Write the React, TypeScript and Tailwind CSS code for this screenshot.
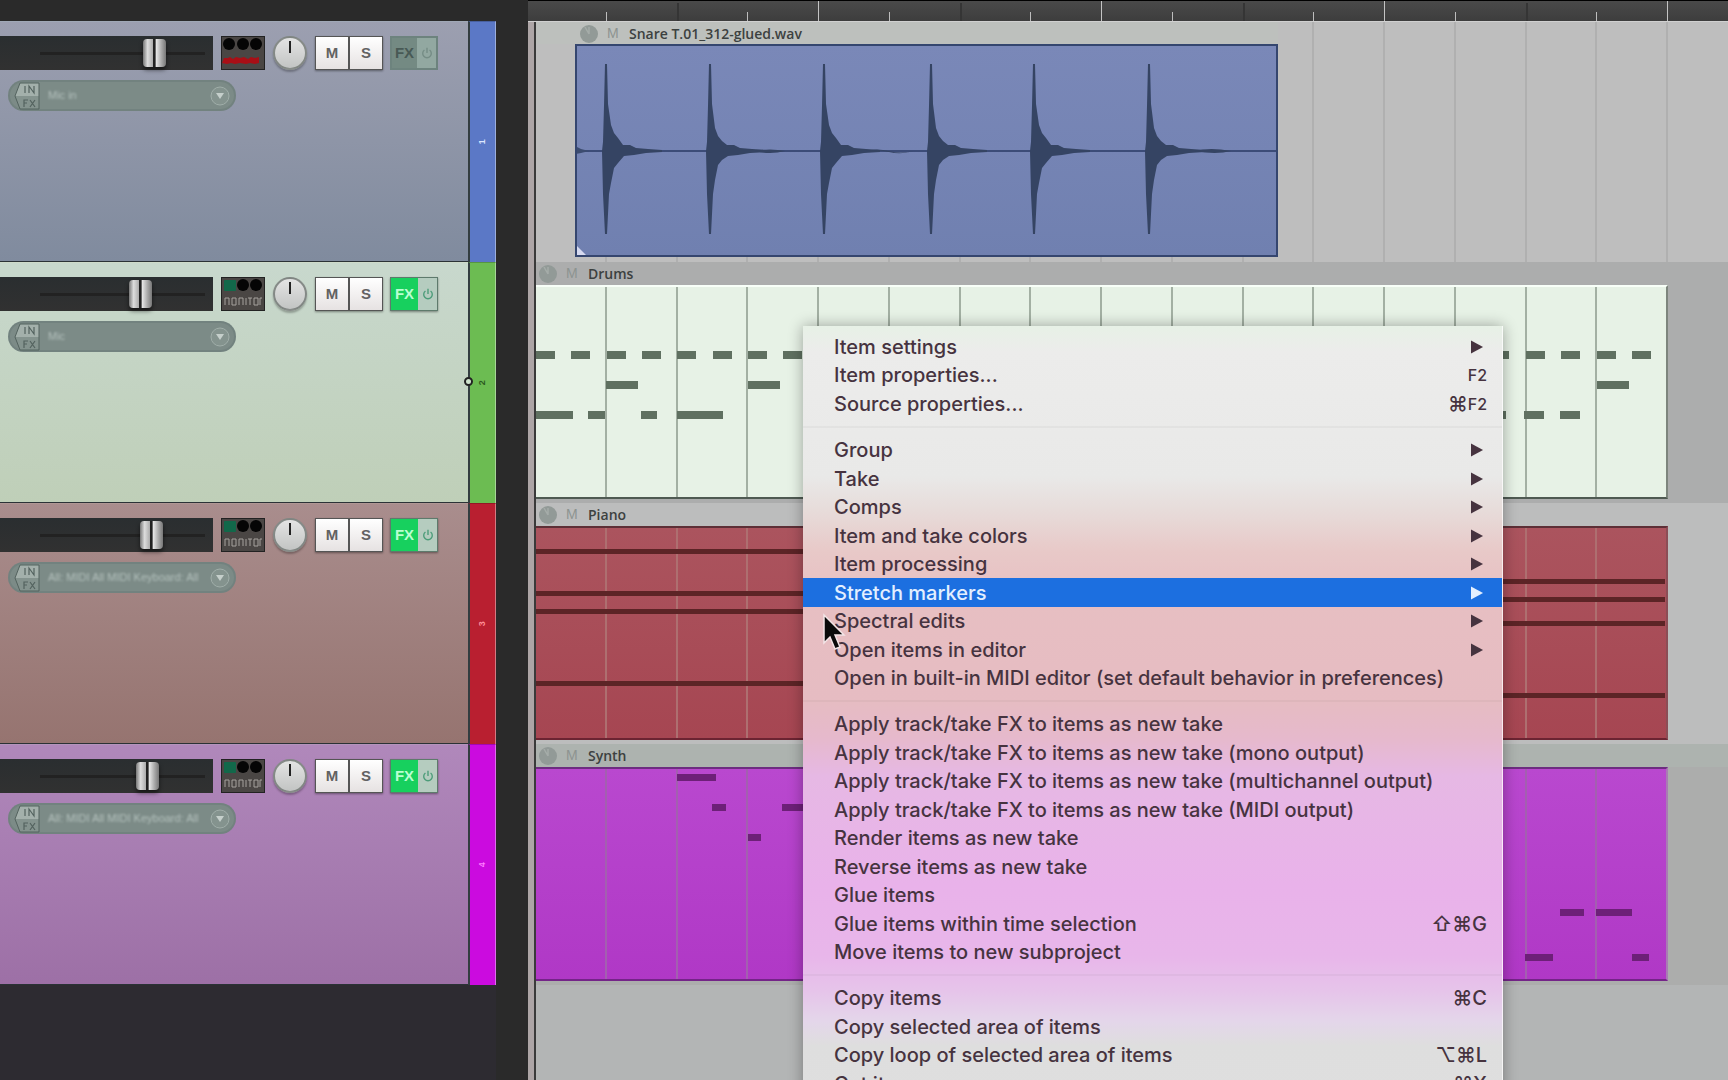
import React from "react";

type Note = { x: number; y: number; w: number };

type Track = {
  id: number;
  name: string;
  volume: number;
  input: string;
  armed: string;
  fxOn: boolean;
  panel: string;
  strip: string;
  number: string;
};

type MenuEntry = { label: string; keys?: string; sub?: boolean; active?: boolean; small?: string };

const tracks: Track[] = [
  { id: 1, name: "Snare", volume: 143, input: "Mic in", armed: "input", fxOn: false, panel: "from-[#9c9fb0] to-[#808b9e]", strip: "bg-[#5b78c6]", number: "text-[#dce6ff]" },
  { id: 2, name: "Drums", volume: 129, input: "Mic", armed: "monitor", fxOn: true, panel: "from-[#c8d8cd] to-[#bfcfb8]", strip: "bg-[#6cbc52]", number: "text-[#2c5a20]" },
  { id: 3, name: "Piano", volume: 140, input: "All: MIDI All MIDI Keyboard: All", armed: "monitor", fxOn: true, panel: "from-[#a98d8d] to-[#967470]", strip: "bg-[#b91f30]", number: "text-[#ff8f97]" },
  { id: 4, name: "Synth", volume: 136, input: "All: MIDI All MIDI Keyboard: All", armed: "monitor", fxOn: true, panel: "from-[#b088bb] to-[#9d70a6]", strip: "bg-[#cb0bdf]", number: "text-[#ff7dff]" },
];

const hats: Note[] = Array.from({ length: 32 }, (_, i) => ({ x: Math.round(i * 35.35), y: 66, w: 19 }));

const drumNotes: Note[] = [
  ...hats,
  ...Array.from({ length: 8 }, (_, i) => ({ x: 70 + Math.round(i * 141.5), y: 96, w: 32 })),
  { x: 0, y: 126, w: 37 },
  { x: 52, y: 126, w: 17 },
  { x: 105, y: 126, w: 16 },
  { x: 141, y: 126, w: 46 },
  { x: 952, y: 126, w: 18 },
  { x: 988, y: 126, w: 20 },
  { x: 1024, y: 126, w: 20 },
];

const pianoNotes: Note[] = [
  { x: 0, y: 23, w: 560 },
  { x: 0, y: 65, w: 560 },
  { x: 0, y: 83, w: 560 },
  { x: 0, y: 155, w: 560 },
  { x: 560, y: 53, w: 569 },
  { x: 560, y: 71, w: 569 },
  { x: 560, y: 95, w: 569 },
  { x: 560, y: 167, w: 569 },
];

const synthNotes: Note[] = [
  { x: 141, y: 7, w: 39 },
  { x: 176, y: 37, w: 14 },
  { x: 212, y: 67, w: 13 },
  { x: 246, y: 37, w: 26 },
  { x: 989, y: 187, w: 28 },
  { x: 1024, y: 142, w: 24 },
  { x: 1060, y: 142, w: 36 },
  { x: 1096, y: 187, w: 17 },
];

const menu: MenuEntry[][] = [
  [
    { label: "Item settings", sub: true },
    { label: "Item properties...", small: "F2" },
    { label: "Source properties...", keys: "⌘", small: "F2" },
  ],
  [
    { label: "Group", sub: true },
    { label: "Take", sub: true },
    { label: "Comps", sub: true },
    { label: "Item and take colors", sub: true },
    { label: "Item processing", sub: true },
    { label: "Stretch markers", sub: true, active: true },
    { label: "Spectral edits", sub: true },
    { label: "Open items in editor", sub: true },
    { label: "Open in built-in MIDI editor (set default behavior in preferences)" },
  ],
  [
    { label: "Apply track/take FX to items as new take" },
    { label: "Apply track/take FX to items as new take (mono output)" },
    { label: "Apply track/take FX to items as new take (multichannel output)" },
    { label: "Apply track/take FX to items as new take (MIDI output)" },
    { label: "Render items as new take" },
    { label: "Reverse items as new take" },
    { label: "Glue items" },
    { label: "Glue items within time selection", keys: "⇧⌘G" },
    { label: "Move items to new subproject" },
  ],
  [
    { label: "Copy items", keys: "⌘C" },
    { label: "Copy selected area of items" },
    { label: "Copy loop of selected area of items", keys: "⌥⌘L" },
    { label: "Cut items", keys: "⌘X" },
  ],
];

const GRID = 70.75;

const ArmButton = ({ label }: { label: string }) => {
  const red = label === "input";
  return (
    <button aria-label={label} className="ml-2 h-[34px] w-[44px] border border-[#222] bg-[#4a4644]">
      <svg viewBox="0 0 42 32" className="block h-full w-full">
        {red ? <circle cx="7" cy="7" r="6" fill="#050505" /> : <rect x="2" y="2" width="12" height="11" rx="1" fill="#12684a" />}
        <circle cx="21" cy="7" r="6" fill="#050505" />
        <circle cx="34" cy="7" r="6" fill="#050505" />
        {red ? (
          <path d="M2 21h4l2-1 3 2 3-2 4 1 4-1 4 2 3-2 4 1 4-1v6l-4 1-5-1-4 1-6-1-5 1-4-1-4 1-5-1z" fill="#a80f16" />
        ) : (
          <g fill="none" stroke="#a5a19d" strokeWidth="1">
            <path d="M3 27v-7h4v7m3 0v-7h4v7h-4m7 0v-7h4v7m3-7v7m2-7h4m-2 0v7m4 0v-7h4v7h-4m6 0v-7h2" />
          </g>
        )}
      </svg>
    </button>
  );
};

const PowerIcon = () => (
  <svg viewBox="0 0 14 14" className="h-3 w-3" fill="none" stroke="currentColor" strokeWidth="1.6">
    <path d="M4 3.5a5 5 0 1 0 6 0M7 1v6" />
  </svg>
);

const TrackPanel = ({ track }: { track: Track }) => (
  <section aria-label={track.name} className="relative flex h-[241px]">
    <div className={`flex-1 border-t border-b border-t-white/25 border-b-[#2b3236] bg-linear-to-b pt-[14px] ${track.panel}`}>
      <div className="flex h-[34px] items-center">
        <div className="relative h-[34px] w-[213px] bg-linear-to-b from-[#2a2e30] to-[#313131]">
          <div className="absolute top-4 right-2 left-10 h-[3px] bg-[#222]" />
          <input
            type="range"
            aria-label={`${track.name} volume`}
            min={0}
            max={190}
            defaultValue={track.volume}
            className="absolute inset-0 h-full w-full appearance-none bg-transparent [&::-webkit-slider-thumb]:h-7 [&::-webkit-slider-thumb]:w-[23px] [&::-webkit-slider-thumb]:appearance-none [&::-webkit-slider-thumb]:rounded-sm [&::-webkit-slider-thumb]:bg-[linear-gradient(90deg,#777,#ddd_20%,#aaa_44%,#222_45%,#222_54%,#eee_55%,#aaa_80%,#777)] [&::-webkit-slider-thumb]:shadow-[0_3px_4px_#0008]"
          />
        </div>
        <ArmButton label={track.armed} />
        <button aria-label={`${track.name} pan`} className="ml-2 flex h-[34px] w-[34px] justify-center rounded-full border-2 border-[#6f7672]/80 bg-linear-to-b from-[#e4e4e4] to-[#c2c4c3] pt-[3px] shadow-[0_2px_2px_#0004]">
          <span className="h-3 w-[2px] bg-[#222]" />
        </button>
        <div className="ml-2 flex h-[34px] w-[68px] border border-[#555] text-[15px] font-bold text-[#626262] shadow-[0_1px_2px_#0006]">
          <button className="flex-1 bg-linear-to-b from-white to-[#e6e2e2]">M</button>
          <button className="flex-1 border-l-2 border-[#555] bg-linear-to-b from-white to-[#e6e2e2]">S</button>
        </div>
        {track.fxOn ? (
          <div className="ml-[7px] flex h-[34px] w-[48px] border border-[#5e7a6c] text-[15px] font-bold shadow-[0_1px_2px_#0006]">
            <button className="w-[27px] bg-[#17d05e] text-[#b9ffd2]">FX</button>
            <button aria-label="Bypass" className="flex flex-1 items-center justify-center bg-[#b5ccbf] text-[#4c9c79]"><PowerIcon /></button>
          </div>
        ) : (
          <div className="ml-[7px] flex h-[34px] w-[48px] border-2 border-[#6d837e] text-[15px] font-bold">
            <button className="w-[25px] bg-[#748a83] text-[#485955]">FX</button>
            <button aria-label="Bypass" className="flex flex-1 items-center justify-center bg-[#92a8a1] text-[#758c85]"><PowerIcon /></button>
          </div>
        )}
      </div>
      <div className="mt-[10px] ml-2 flex h-[31px] w-[228px] items-center rounded-full border-2 border-[#6d7d79]/60 bg-[#7c8b87] pr-1 pl-1 text-[#b4c1bd]">
        <svg viewBox="0 0 26 28" className="h-7 w-[26px]">
          <path d="M1 14 6 1h19v13z" fill="#a3b0ab" />
          <path d="M1 14h24v13H6z" fill="#84938e" />
          <path d="M1 14 6 1h19v26H6z" fill="none" stroke="#53625e" />
          <path d="M11 4v7M15 11V4l5 7V4M10 25v-7h4m-4 3h3M16 18l5 7M21 18l-5 7" fill="none" stroke="#53625e" strokeWidth="1.2" />
        </svg>
        <span className="ml-2 flex-1 truncate text-[11px] blur-[1px]">{track.input}</span>
        <svg viewBox="0 0 20 20" className="h-5 w-5">
          <circle cx="10" cy="10" r="9" fill="#84938e" stroke="#a0aea9" />
          <path d="M6 7h8l-4 6z" fill="#c5cfcb" />
        </svg>
      </div>
    </div>
    <div className={`flex w-[28px] items-center justify-center border-t border-r border-l-2 border-t-black/20 border-r-white/40 border-l-[#333d40] text-[9px] font-bold ${track.strip} ${track.number}`}>
      <span className="-rotate-90">{track.id}</span>
    </div>
    {track.id === 2 && <span className="absolute top-[115px] right-[23px] h-[9px] w-[9px] rounded-full border-2 border-[#222] bg-[#cfe3cd]" />}
  </section>
);

const ItemLabel = ({ name }: { name: string }) => (
  <div className="flex h-[23px] items-center pl-[2px] text-[14px] text-[#3c4140]">
    <svg viewBox="0 0 20 20" className="h-5 w-5">
      <circle cx="10" cy="10" r="9" fill="#929a97" />
      <path d="M10 10 6 3M10 10V3" stroke="#a5acA9" strokeWidth="1.5" />
    </svg>
    <span className="ml-2 w-[14px] text-[#8d9491]">M</span>
    <span className="ml-2 font-['Open_Sans',sans-serif] font-semibold">{name}</span>
  </div>
);

const GridLines = ({ color, width = 2 }: { color: string; width?: number }) => (
  <g fill={color}>
    {Array.from({ length: 16 }, (_, i) => (
      <rect key={i} x={Math.round((i + 1) * GRID) - 2} y="0" width={width} height="241" />
    ))}
  </g>
);

const MidiItem = ({ notes, className, fill, grid, h }: { notes: Note[]; className: string; fill: string; grid: string; h: number }) => (
  <div className={`h-[214px] w-[1132px] overflow-hidden border-t-2 border-b-2 border-r-2 ${className}`}>
    <svg width="1132" height="210" className="block">
      <GridLines color={grid} />
      {notes.map((n, i) => (
        <rect key={i} x={n.x} y={n.y - 2} width={n.w} height={h} fill={fill} />
      ))}
    </svg>
  </div>
);

const hit = (x: number, s: number) =>
  `M${x - 4} 107L${x - 3} 98L${x - 2} 62L${x - 1} 20H${x + 1}L${x + 2} 60L${x + 5} ${84 - s}L${x + 8} ${92 - s}L${x + 12} ${97 - s}L${x + 17} 101L${x + 24} 101L${x + 30} 104L${x + 42} 105L${x + 56} 106V108L${x + 40} 109L${x + 28} 111L${x + 18} 112L${x + 12} ${116 + s}L${x + 8} ${121 + s}L${x + 5} ${136 + s}L${x + 3} 150L${x + 1} 190H${x - 1}L${x - 3} 150Z`;

const AudioItem = () => (
  <div className="ml-[39px] h-[213px] w-[703px] border-2 border-[#35466f] bg-linear-to-b from-[#7a88b8] to-[#7080b0]">
    <svg width="699" height="209" viewBox="2 2 699 209" className="block">
      <path d="M0 107H702" stroke="#3c4c78" strokeWidth="2" />
      <path d="M0 102 6 105 14 107 6 109 0 110z" fill="#3c4c70" />
      {[31, 135, 249, 356, 459, 574].map((x, i) => (
        <path key={x} d={hit(x, i % 2 ? 0 : 3)} fill="#354463" />
      ))}
      <path d="M290 107q12-3 24 0t24 0q-12 4-24 1t-24-1M180 107q15-3 30 0-15 4-30 0M620 107q15-4 36 0-15 4-36 0" fill="#354463" />
      <path d="M2 202l9 9H2z" fill="#d6daf0" />
    </svg>
  </div>
);

const Ruler = () => (
  <div className="h-[21px] border-t border-black bg-linear-to-b from-[#4a4a4a] to-[#3d3d3d]">
    <svg width="1200" height="20" className="block">
      {Array.from({ length: 16 }, (_, i) => {
        const n = i + 1;
        const x = Math.round(n * GRID) + 7;
        if (n % 4 === 0) return <rect key={n} x={x} y="0" width="1" height="20" fill="#c4c4c4" />;
        if (n % 2 === 1) return <rect key={n} x={x} y="11" width="1" height="9" fill="#bdbdbd" />;
        return <rect key={n} x={x} y="2" width="2" height="18" fill="#353535" />;
      })}
    </svg>
  </div>
);

const ContextMenu = () => (
  <div
    role="menu"
    className="absolute top-[326px] left-[803px] w-[700px] border-r border-white/70 bg-[linear-gradient(180deg,#e7f1e6_0px,#ececeb_26px,#e9e9e8_150px,#e7dcda_184px,#e8c9c8_225px,#e7bfc2_270px,#e6bcc2_375px,#e6b9cc_412px,#e6b8e4_450px,#e9b2ea_560px,#e8b6ea_630px,#e6c4ea_665px,#e4d6ea_695px,#dedede_720px,#dfdfdf_800px)] pt-[6px] font-[Inter,sans-serif] text-[20px] font-medium text-[#46333f] shadow-[0_0_14px_#0005]"
  >
    {menu.map((group, g) => (
      <div key={g}>
        {g > 0 && (
          <div className="flex h-[18px] items-center">
            <div className="h-[2px] w-full bg-black/3" />
          </div>
        )}
        {group.map((entry) => (
          <button
            key={entry.label}
            role="menuitem"
            className={`flex w-full items-center pr-[15px] pl-[31px] text-left whitespace-nowrap odd:h-[29px] even:h-7 ${entry.active ? "bg-[#1c6fe0] text-[#e3efff]" : ""}`}
          >
            <span className="flex-1">{entry.label}</span>
            {entry.keys && <span className="font-[Inter,'DejaVu_Sans',sans-serif]">{entry.keys}</span>}
            {entry.small && <span className="text-[16px]">{entry.small}</span>}
            {entry.sub && (
              <svg viewBox="0 0 14 16" className="mr-[3px] h-4 w-[13px]" fill="currentColor">
                <path d="M0 1v14l13-7z" />
              </svg>
            )}
          </button>
        ))}
      </div>
    ))}
  </div>
);

const App = () => {
  return (
    <div className="relative flex h-screen overflow-hidden bg-[#2a2a2a] font-['Liberation_Sans',sans-serif]">
      {/* track control panel */}
      <aside className="flex w-[496px] shrink-0 flex-col pt-[21px]">
        {tracks.map((track) => (
          <TrackPanel key={track.id} track={track} />
        ))}
        <div className="flex-1 bg-[#2d2b31]" />
      </aside>

      {/* arrange view */}
      <main className="ml-8 flex min-w-0 flex-1 flex-col">
        <Ruler />
        <div className="flex flex-1 border-t border-[#d0d0d0]">
          <div className="w-2 border-r-2 border-r-[#3a3a3a] bg-[#ada5a6]" />
          <div className="min-w-0 flex-1 bg-[#b3b5b5]">
            <div className="relative h-[240px] overflow-hidden bg-[#bebebe]">
              <svg width="1140" height="240" className="absolute inset-0">
                <GridLines color="#b0b0b0" />
              </svg>
              <div className="relative">
                <div className="h-[22px] w-[742px] bg-[#bdc0bd] pl-[41px]"><ItemLabel name="Snare T.01_312-glued.wav" /></div>
                <AudioItem />
              </div>
            </div>
            <div className="h-[241px] bg-[#acadad]">
              <ItemLabel name="Drums" />
              <MidiItem notes={drumNotes} h={8} fill="#5f7060" grid="#a3b0a3" className="border-t-[#f8fff8] border-r-[#7d857d] border-b-[#4f5a52] bg-[#e7f2e6]" />
            </div>
            <div className="h-[241px] bg-[#bcbdbd]">
              <ItemLabel name="Piano" />
              <MidiItem notes={pianoNotes} h={5} fill="#5c2426" grid="#ae6f70" className="border-t-[#5d2f36] border-r-[#8c4d56] border-b-[#6c2432] bg-linear-to-b from-[#ab545e] to-[#a64652]" />
            </div>
            <div className="h-[241px] bg-[#acadac]">
              <div className="bg-[#adb3af]"><ItemLabel name="Synth" /></div>
              <MidiItem notes={synthNotes} h={7} fill="#6d2078" grid="#a35fb0" className="border-t-[#6d2d80] border-r-[#a97bb4] border-b-[#742488] bg-linear-to-b from-[#b948cf] to-[#b038c6]" />
            </div>
          </div>
        </div>
      </main>

      <ContextMenu />

      {/* mouse pointer */}
      <svg viewBox="0 0 24 38" className="pointer-events-none absolute top-[613px] left-[823px] h-[38px] w-6">
        <path d="M1 2v28l6-6 5 12 5-2-5-12h9z" fill="#0a0a0a" stroke="#f2e4e6" strokeWidth="1.5" />
      </svg>
    </div>
  );
};

export default App;
